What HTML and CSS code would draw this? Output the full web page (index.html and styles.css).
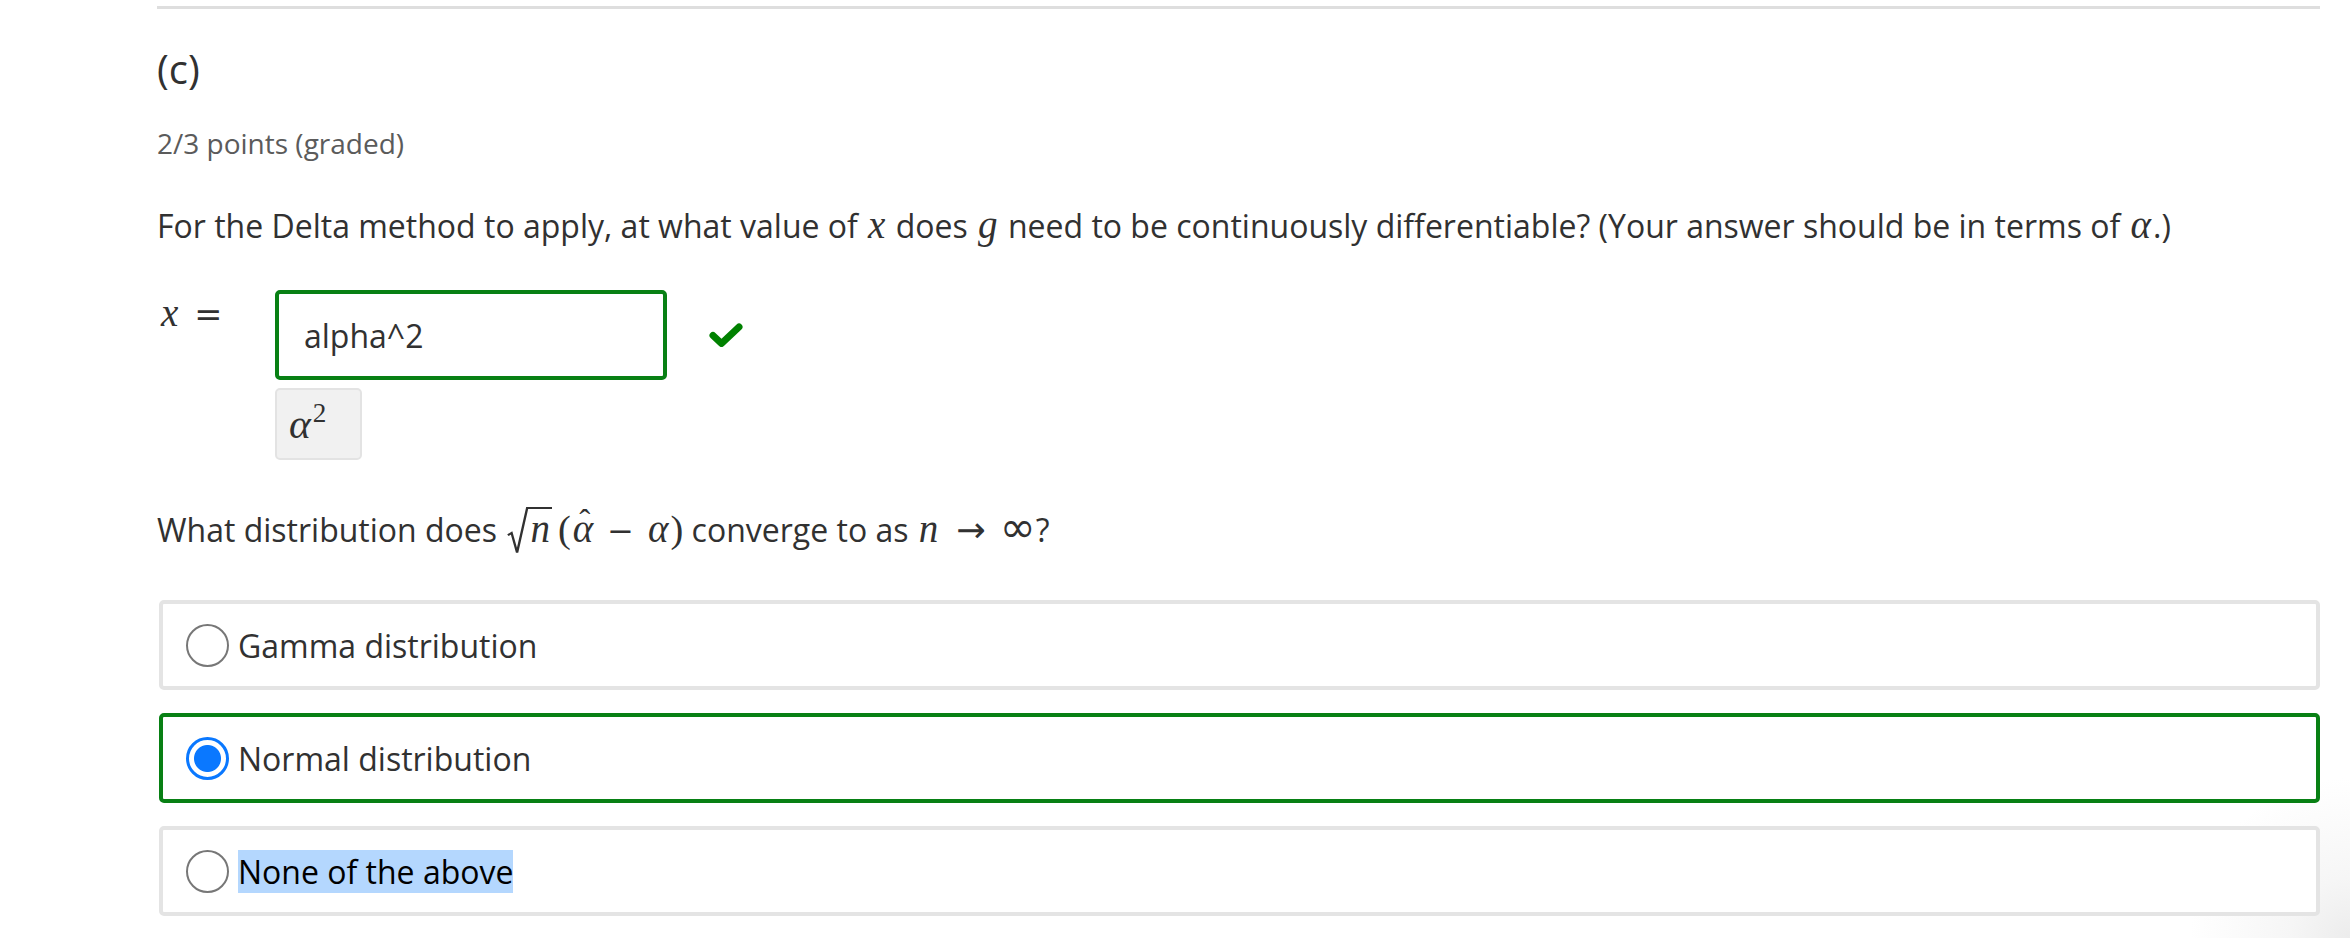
FILE: index.html
```html
<!DOCTYPE html>
<html lang="en">
<head>
  <meta charset="UTF-8" />
  <meta name="viewport" content="width=device-width, initial-scale=1.0" />
  <title>Problem (c)</title>
  <link rel="stylesheet" href="styles.css">
</head>
<body>

  <div class="problem">
    <div class="divider"></div>

    <h3 class="problem-header">(c)</h3>
    <div class="problem-progress">2/3 points (graded)</div>

    <p class="prompt">For the Delta method to apply, at what value of <span class="mi">x</span> does <span class="mi">g</span> need to be continuously differentiable? (Your answer should be in terms of <span class="mi">α</span>.)</p>

    <div class="answer-row">
      <label class="math-label" for="answer-c1"><span class="mi">x</span><span class="mo rel">=</span></label>
      <div class="answer-col">
        <div class="input-line">
          <input id="answer-c1" class="answer correct" type="text" value="alpha^2" />
          <svg class="status-icon" viewBox="0 0 34 24" width="34" height="24" aria-label="correct">
            <path d="M4 12.5 L12.5 20.5 L30 4" fill="none" stroke="#008100" stroke-width="7" stroke-linecap="round" stroke-linejoin="round"/>
          </svg>
        </div>
        <div class="preview"><span class="mi">α</span><sup class="sup">2</sup></div>
      </div>
    </div>

    <p class="prompt q2">What distribution does <span class="sqrt"><svg class="radical" viewBox="0 0 24 60" preserveAspectRatio="none" aria-hidden="true"><path d="M1 36 L5 33 L11 58 L22 1.3 L24 1.3" fill="none" stroke="#313131" stroke-width="2.6" stroke-linejoin="miter"/></svg><span class="radicand mi">n</span></span><span class="mo paren">(</span><span class="mi hat">α</span><span class="mo bin">−</span><span class="mi">α</span><span class="mo">)</span> converge to as <span class="mi">n</span><span class="mo arrow">→</span><span class="mo inf">∞</span>?</p>

    <div class="choices">
      <label class="choice">
        <input type="radio" name="dist" />
        <span class="choice-text">Gamma distribution</span>
      </label>
      <label class="choice correct">
        <input type="radio" name="dist" checked />
        <span class="choice-text">Normal distribution</span>
      </label>
      <label class="choice">
        <input type="radio" name="dist" />
        <span class="choice-text"><span class="selected-text">None of the above</span></span>
      </label>
    </div>
  </div>

</body>
</html>
```

FILE: styles.css
```css
:root {
  --text: #313131;
  --muted: #5b5b5b;
  --green: #088014;
  --line: #e4e4e4;
  --math: "Liberation Serif", "DejaVu Serif", serif;
}

body {
  margin: 0;
  font-family: "Open Sans", "Noto Sans", sans-serif;
  color: var(--text);
  background: #fff radial-gradient(circle at 100% 100%, #ececec 0, #f6f6f6 60px, rgba(255,255,255,0) 160px) no-repeat;
  min-height: 938px;
}

.problem {
  padding: 6px 30px 0 157px;
}

.divider {
  height: 3px;
  background-color: #dedede;
}

.problem-header {
  margin: 36px 0 0;
  font-size: 40px;
  font-weight: 400;
  line-height: 48px;
}

.problem-progress {
  margin-top: 30px;
  font-size: 28px;
  line-height: 40px;
  color: var(--muted);
}

.prompt {
  margin: 39px 0 0;
  font-size: 32px;
  line-height: 48px;
}

.prompt.q2 {
  margin-top: 46px;
}

.mi {
  font-family: var(--math);
  font-style: italic;
  font-size: 1.22em;
  line-height: 1;
  margin: 0 2px;
}

.mo {
  font-family: var(--math);
  font-size: 1.2em;
  line-height: 1;
}

.rel {
  margin-left: 14px;
  font-family: "DejaVu Sans", sans-serif;
  font-size: 1.05em;
}

.bin {
  margin: 0 12px;
  font-family: "DejaVu Sans", sans-serif;
  font-size: 1em;
}

.arrow {
  margin: 0 14px 0 16px;
  font-family: "DejaVu Sans", sans-serif;
  font-size: 1.1em;
}

.inf {
  font-family: "DejaVu Sans", sans-serif;
  font-size: 1.35em;
}

.hat {
  position: relative;
  display: inline-block;
}

.hat::after {
  content: "ˆ";
  position: absolute;
  left: 0.2em;
  top: -0.12em;
  font-style: normal;
  font-size: 0.85em;
}

.answer-row {
  display: flex;
  align-items: flex-start;
  margin-top: 40px;
}

.math-label {
  width: 116px;
  padding-left: 2px;
  font-size: 32px;
  line-height: 48px;
}

.input-line {
  display: flex;
  align-items: center;
  gap: 42px;
}

.answer {
  box-sizing: border-box;
  width: 392px;
  height: 90px;
  padding: 0 25px;
  border: 4px solid #ccc;
  border-radius: 5px;
  font-family: "Open Sans", sans-serif;
  font-size: 32px;
  color: var(--text);
  outline: none;
}

.answer.correct {
  border-color: var(--green);
}

.preview {
  box-sizing: border-box;
  width: 87px;
  height: 72px;
  margin-top: 8px;
  padding: 10px 0 0 12px;
  background-color: #f1f1f1;
  border: 2px solid #e3e3e3;
  border-radius: 5px;
  font-size: 32px;
  line-height: 52px;
}

.preview .mi {
  font-size: 1.3em;
  margin: 0;
}

.sup {
  font-family: var(--math);
  font-size: 0.85em;
  vertical-align: 0.6em;
  line-height: 0;
  margin-left: 2px;
}

/* radical sign is decoration drawn over the left padding */
.sqrt {
  position: relative;
  display: inline-block;
  padding-left: 22px;
  margin-left: 2px;
  line-height: 1;
}

.radical {
  position: absolute;
  left: 0;
  top: 0;
  width: 22px;
  height: calc(100% + 6px);
}

.radicand {
  display: inline-block;
  border-top: 2.6px solid var(--text);
  line-height: 1;
  padding: 0 2px 0 1px;
  margin: 0;
}

.paren {
  margin-left: 6px;
}

.choices {
  display: flex;
  flex-direction: column;
  gap: 23px;
  margin-top: 46px;
}

.choice {
  box-sizing: border-box;
  display: flex;
  align-items: center;
  gap: 9px;
  height: 90px;
  padding: 0 23px;
  margin-left: 2px;
  border: 4px solid var(--line);
  border-radius: 5px;
  background-color: #fff;
  font-size: 32px;
  cursor: pointer;
}

.choice.correct {
  border-color: var(--green);
}

.choice input {
  appearance: none;
  box-sizing: border-box;
  width: 43px;
  height: 43px;
  margin: 0;
  flex: none;
  border: 2.5px solid #777;
  border-radius: 50%;
  background-color: #fff;
}

.choice input:checked {
  border: 3px solid #0a78ff;
  background: radial-gradient(circle, #0a78ff 0, #0a78ff 13px, #fff 14px);
}

.selected-text {
  background-color: #b4d7fe;
  color: #000;
}
```
